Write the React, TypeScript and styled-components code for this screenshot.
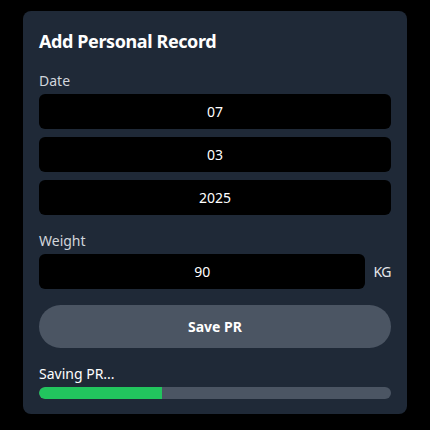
import React, { useState } from 'react';
import styled, { createGlobalStyle } from 'styled-components';

const GlobalStyle = createGlobalStyle`
  html, body {
    margin: 0;
    padding: 0;
    background: #000;
  }
  body {
    font-family: "Noto Sans", "Open Sans", "Liberation Sans", sans-serif;
    color: #fff;
  }
  * { box-sizing: border-box; }
`;

const Page = styled.div`
  display: flex;
  justify-content: center;
  padding-top: 11px;
`;

const Card = styled.div`
  width: 384px;
  background: #1f2937;
  border-radius: 8px;
  padding: 16px 16px 15px;
  display: flex;
  flex-direction: column;
`;

const Title = styled.h2`
  margin: 0 0 16px;
  font-size: 18px;
  line-height: 28px;
  font-weight: 700;
  letter-spacing: -0.4px;
  color: #fff;
`;

const Label = styled.label<{ $gap?: number }>`
  display: block;
  font-size: 14px;
  line-height: 20px;
  color: #d1d5db;
  margin-bottom: ${(p) => p.$gap ?? 3}px;
`;

const Stack = styled.div`
  display: flex;
  flex-direction: column;
  gap: 8px;
  margin-bottom: 16px;
`;

const Field = styled.input`
  width: 100%;
  min-width: 0;
  height: 35px;
  border: none;
  outline: none;
  border-radius: 6px;
  background: #000;
  color: #fff;
  text-align: center;
  font-family: inherit;
  font-size: 14px;
`;

const WeightRow = styled.div`
  display: flex;
  align-items: center;
  gap: 8px;
  margin-bottom: 16px;
`;

const Unit = styled.span`
  flex: 0 0 17px;
  white-space: nowrap;
  font-size: 14px;
  letter-spacing: -0.5px;
  color: #e5e7eb;
`;

const SaveButton = styled.button`
  width: 100%;
  height: 43px;
  border: none;
  border-radius: 999px;
  background: #4b5563;
  color: #fff;
  font-family: inherit;
  font-size: 14px;
  font-weight: 700;
  margin-bottom: 16px;
  cursor: pointer;
`;

const Status = styled.div`
  font-size: 14px;
  line-height: 20px;
  color: #fff;
  margin-bottom: 3px;
`;

const Track = styled.div`
  height: 12px;
  border-radius: 999px;
  background: #4b5563;
  overflow: hidden;
`;

const Fill = styled.div`
  height: 100%;
  background: #22c55e;
  border-radius: 999px 0 0 999px;
`;

export default function App() {
  const [day, setDay] = useState('07');
  const [month, setMonth] = useState('03');
  const [year, setYear] = useState('2025');
  const [weight, setWeight] = useState('90');
  const progress = 35;

  return (
    <>
      <GlobalStyle />
      <Page>
        <Card>
          <Title>Add Personal Record</Title>
          <Label>Date</Label>
          <Stack>
            <Field value={day} onChange={(e) => setDay(e.target.value)} />
            <Field value={month} onChange={(e) => setMonth(e.target.value)} />
            <Field value={year} onChange={(e) => setYear(e.target.value)} />
          </Stack>
          <Label>Weight</Label>
          <WeightRow>
            <Field value={weight} onChange={(e) => setWeight(e.target.value)} />
            <Unit>KG</Unit>
          </WeightRow>
          <SaveButton>Save PR</SaveButton>
          <Status>Saving PR...</Status>
          <Track>
            <Fill style={{ width: `${progress}%` }} />
          </Track>
        </Card>
      </Page>
    </>
  );
}
